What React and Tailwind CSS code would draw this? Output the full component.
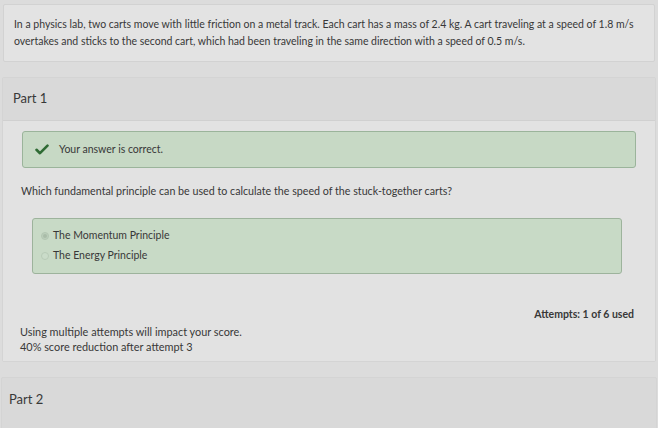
import React from "react";

export default function App() {
  const font = { fontFamily: "Lato, 'Liberation Sans', sans-serif" };
  return (
    <div className="w-[658px] h-[428px] overflow-hidden bg-[#dcdcdc] text-[#383838] pt-[4px]" style={font}>
      <div className="mx-[3px] h-[58px] rounded-[2px] border border-[#d2d2d2] bg-[#e3e3e3] px-[10px] pt-[11px] text-[10.5px] leading-[17px]">
        <p>In a physics lab, two carts move with little friction on a metal track. Each cart has a mass of 2.4 kg. A cart traveling at a speed of 1.8 m/s overtakes and sticks to the second cart, which had been traveling in the same direction with a speed of 0.5 m/s.</p>
      </div>

      <div className="mt-[15px] mx-[2px] border border-[#d4d4d4] rounded-[2px]">
        <div className="h-[43px] bg-[#d9d9d9] flex items-center px-[10px] text-[13px] border-b border-[#d0d0d0]">
          Part 1
        </div>
        <div className="bg-[#e2e2e2] h-[240px] pt-[10px] flex flex-col">
          <div className="shrink-0 mx-[19px] h-[37px] rounded-[3px] border border-[#9bb49b] bg-[#c7d9c5] flex items-center pl-[12px]">
            <svg width="14" height="11" viewBox="0 0 14 11" className="shrink-0">
              <path d="M1.5 5.8 L5 9.2 L12.5 1.6" fill="none" stroke="#2f6b34" strokeWidth="2.6" strokeLinecap="round" strokeLinejoin="round" />
            </svg>
            <span className="ml-[10px] text-[10.5px]">Your answer is correct.</span>
          </div>
          <p className="mt-[15px] ml-[18px] text-[10.7px]">Which fundamental principle can be used to calculate the speed of the stuck-together carts?</p>
          <div className="shrink-0 mt-[19px] ml-[29px] mr-[33px] h-[56px] rounded-[3px] border border-[#9db39c] bg-[#c8dac6] flex flex-col justify-center gap-[4px] pl-[8px] text-[10.5px]">
            <div className="flex items-center gap-[4px]">
              <span className="w-[8px] h-[8px] rounded-full bg-[#bccfbb] border border-[#b3c6b2] flex items-center justify-center">
                <span className="w-[4px] h-[4px] rounded-full bg-[#a9bca8]" />
              </span>
              <span>The Momentum Principle</span>
            </div>
            <div className="flex items-center gap-[4px]">
              <span className="w-[8px] h-[8px] rounded-full border border-[#b8cbb7] bg-[#cadcc9]" />
              <span>The Energy Principle</span>
            </div>
          </div>
          <div className="mt-[33px] flex justify-end pr-[21px] text-[10.5px] font-bold">Attempts: 1 of 6 used</div>
          <div className="mt-[1px] ml-[17px] text-[10.9px] leading-[15px]">
            <p>Using multiple attempts will impact your score.</p>
            <p>40% score reduction after attempt 3</p>
          </div>
        </div>
      </div>

      <div className="mt-[15px] mx-[1px] border border-[#d4d4d4] rounded-[2px] bg-[#d9d9d9] h-[60px] pt-[12px] px-[7px] text-[13px]">
        Part 2
      </div>
    </div>
  );
}
